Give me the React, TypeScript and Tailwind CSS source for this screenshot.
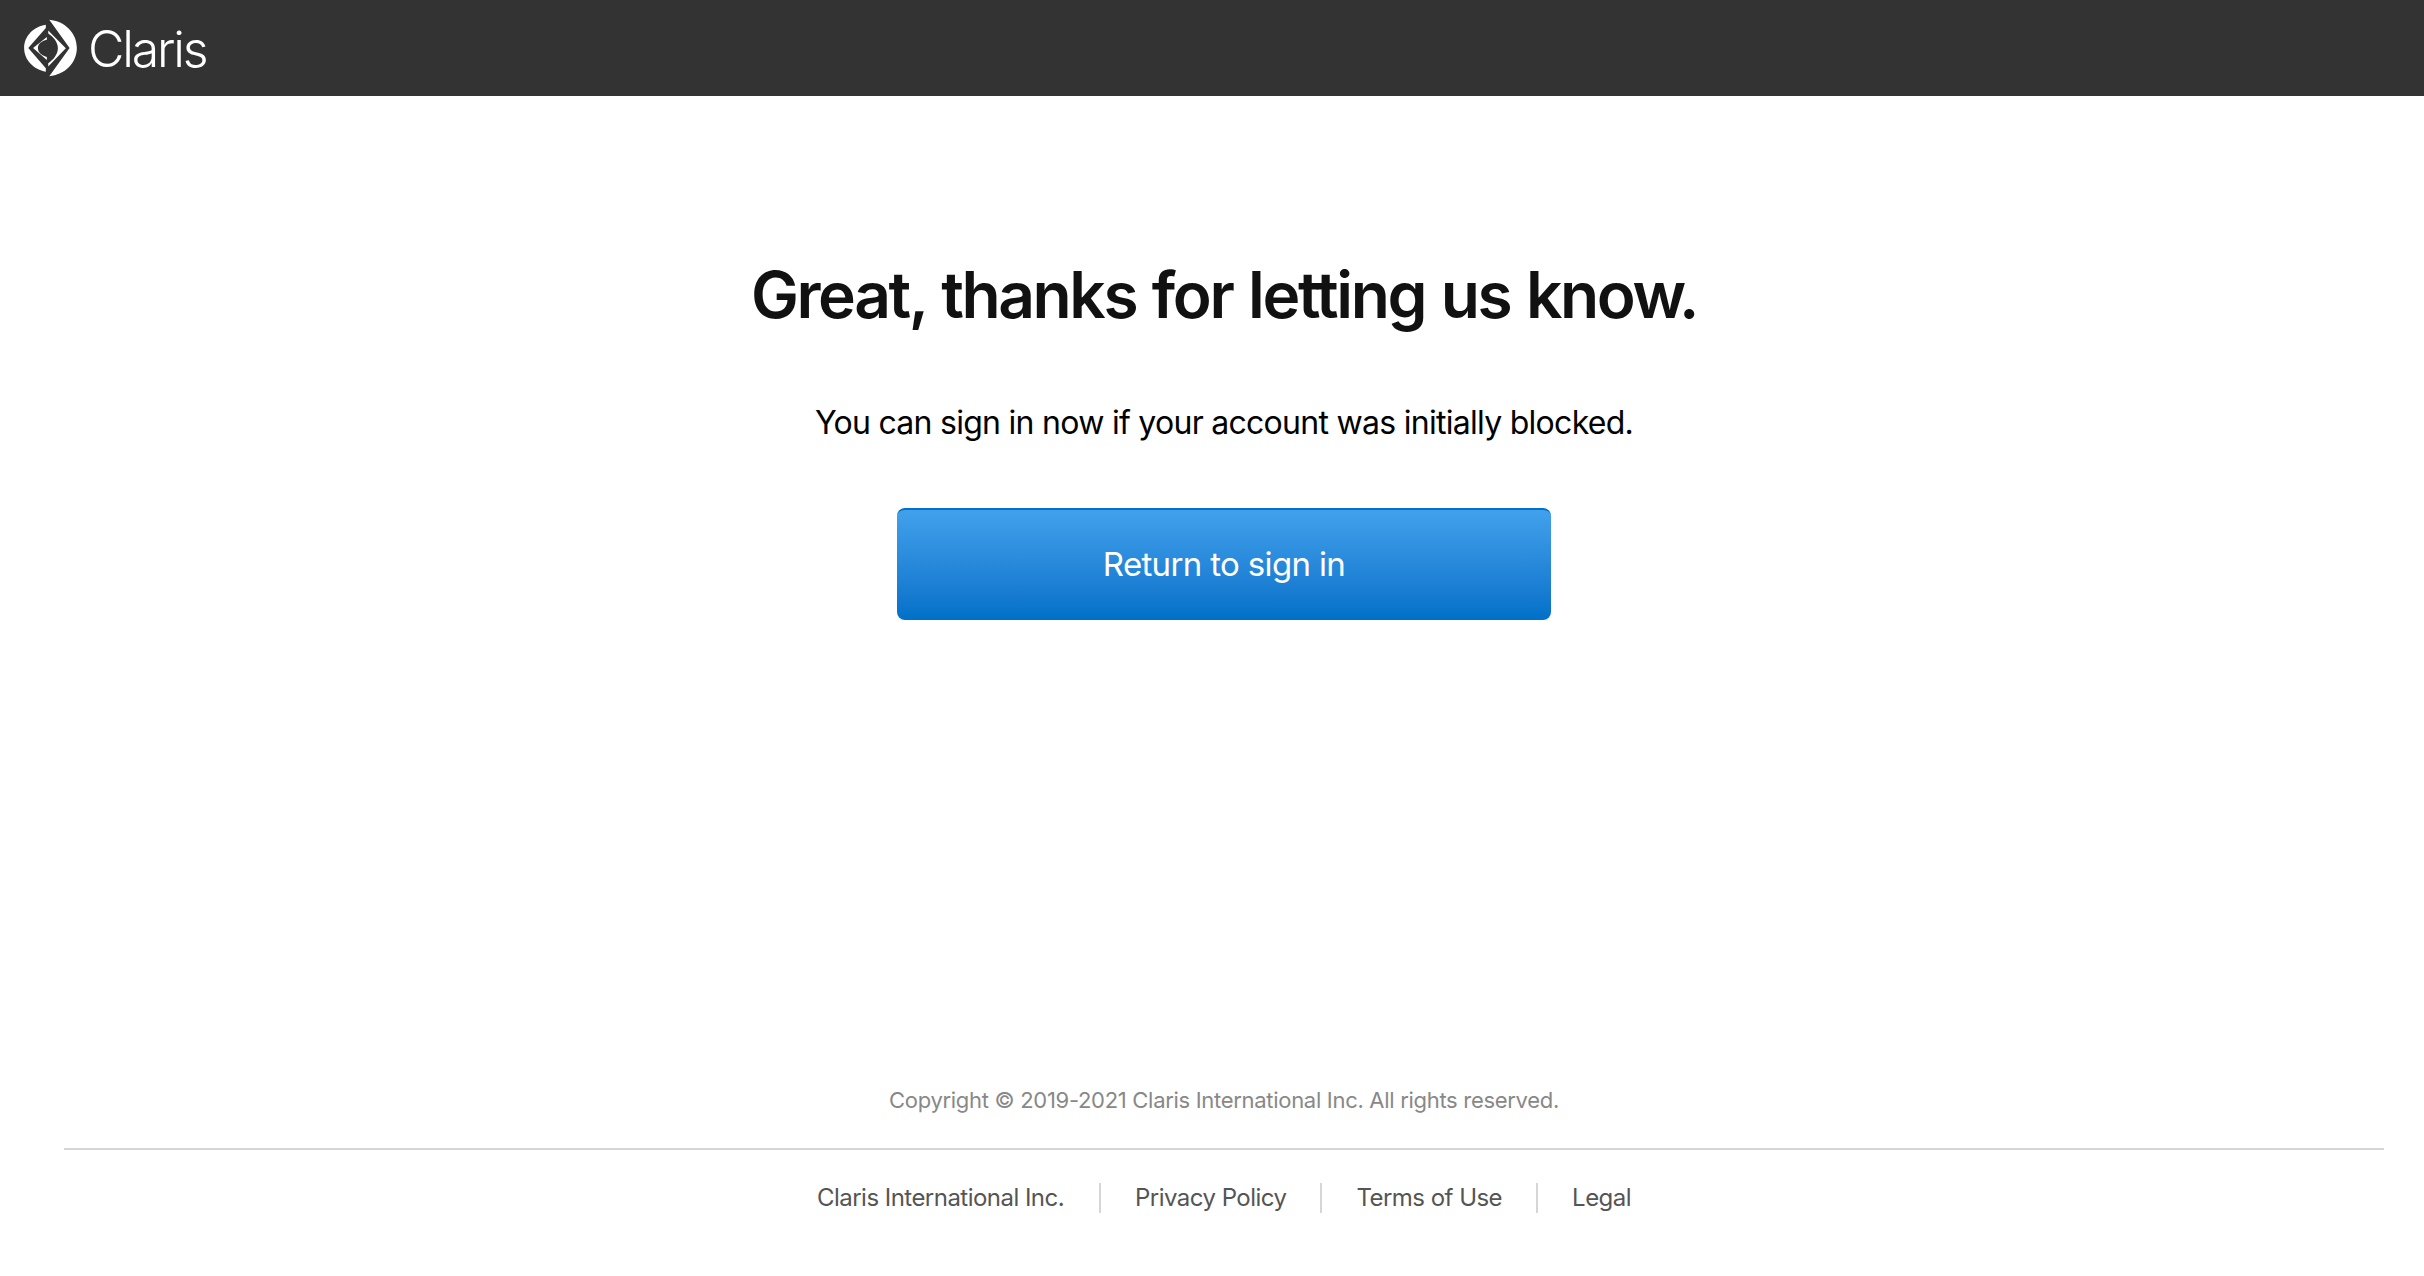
export default function App() {
  const font = "font-['Inter','Liberation_Sans',sans-serif]";
  return (
    <div className={`${font} min-h-[1276px] bg-white flex flex-col`}>
      <header className="h-[96px] bg-[#333333] flex items-center pl-[20px] gap-[6px]">
        <svg viewBox="0 0 180 192" preserveAspectRatio="none" className="w-[62px] h-[66px]" fill="#fff">
          <path d="M85 14 C130 18 165 52 165 96 C165 140 130 174 85 178 L144 96 Z" />
          <path d="M75 28 C40 34 12 60 12 96 C12 132 40 158 75 165 L75 155 L24 96 L75 38 Z" />
          <path d="M78 64 L78 72 C62 76 52 84 52 96 C52 108 62 118 78 122 L78 131 L38 96 Z" />
          <path d="M82 45 L133 97 L82 150 L82 140 C98 130 110 114 110 97 C110 80 98 64 82 54 Z" />
        </svg>
        <span className="relative top-[1px] text-[50px] font-light text-white tracking-[-2.2px] leading-none">Claris</span>
      </header>
      <main className="flex-1 flex flex-col items-center ml-[64px] mr-[40px]">
        <h1 className="mt-[164px] text-[64px] leading-[70px] font-semibold text-[#111111] tracking-[-2.4px] [word-spacing:2px]">
          Great, thanks for letting us know.
        </h1>
        <p className="mt-[72px] text-[32px] leading-[42px] text-black tracking-[-0.72px]">
          You can sign in now if your account was initially blocked.
        </p>
        <button className="mt-[64px] w-[654px] h-[112px] rounded-[8px] border-t-2 border-[#0070c9] bg-gradient-to-b from-[#42a1ec] to-[#0070c9] text-white text-[33px] tracking-[-0.65px]">
          Return to sign in
        </button>
        <p className="mt-[auto] text-[22px] leading-[30px] text-[#888888] tracking-[-0.3px]">
          Copyright © 2019-2021 Claris International Inc. All rights reserved.
        </p>
        <div className="w-full mt-[33px] h-[2px] bg-[#d6d6d6]" />
        <nav className="mt-[33px] mb-[63px] flex items-center text-[24px] leading-[30px] text-[#555555] tracking-[-0.53px]">
          <a className="pr-[35px]">Claris International Inc.</a>
          <a className="px-[34px] border-l-2 border-[#d6d6d6]">Privacy Policy</a>
          <a className="px-[34px] border-l-2 border-[#d6d6d6]">Terms of Use</a>
          <a className="pl-[34px] border-l-2 border-[#d6d6d6]">Legal</a>
        </nav>
      </main>
    </div>
  );
}
